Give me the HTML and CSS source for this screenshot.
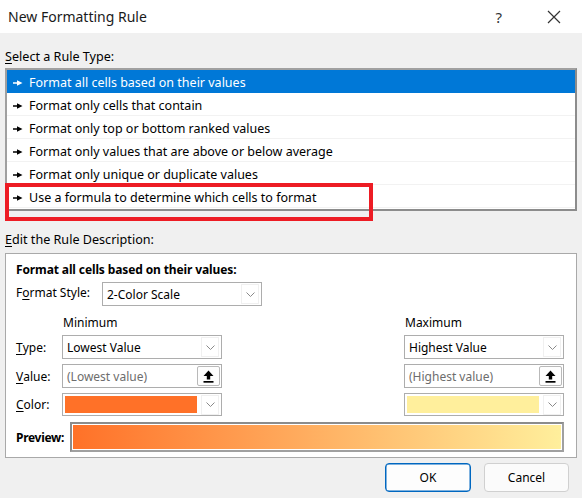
FILE: index.html
```html
<!DOCTYPE html>
<html>
<head>
<meta charset="utf-8">
<link rel="stylesheet" href="styles.css">
</head>
<body>
<div class="dialog">
  <div class="titlebar">
    <div class="title">New Formatting Rule</div>
    <div class="help">?</div>
    <svg class="close" width="14" height="14" viewBox="0 0 14 14"><path d="M1 1L13 13M13 1L1 13" stroke="#333" stroke-width="1.2" fill="none"/></svg>
  </div>
  <div class="content">
    <div class="group-label"><u>S</u>elect a Rule Type:</div>
    <div class="listbox">
      <div class="row selected"><svg class="arrow" width="10" height="6" viewBox="0 0 10 6"><path d="M0 2.3H4V0.3L9.5 3L4 5.7V3.7H0Z" fill="#fff"/></svg>Format all cells based on their values</div>
      <div class="row"><svg class="arrow" width="10" height="6" viewBox="0 0 10 6"><path d="M0 2.3H4V0.3L9.5 3L4 5.7V3.7H0Z" fill="#000"/></svg>Format only cells that contain</div>
      <div class="row"><svg class="arrow" width="10" height="6" viewBox="0 0 10 6"><path d="M0 2.3H4V0.3L9.5 3L4 5.7V3.7H0Z" fill="#000"/></svg>Format only top or bottom ranked values</div>
      <div class="row"><svg class="arrow" width="10" height="6" viewBox="0 0 10 6"><path d="M0 2.3H4V0.3L9.5 3L4 5.7V3.7H0Z" fill="#000"/></svg>Format only values that are above or below average</div>
      <div class="row"><svg class="arrow" width="10" height="6" viewBox="0 0 10 6"><path d="M0 2.3H4V0.3L9.5 3L4 5.7V3.7H0Z" fill="#000"/></svg>Format only unique or duplicate values</div>
      <div class="row"><svg class="arrow" width="10" height="6" viewBox="0 0 10 6"><path d="M0 2.3H4V0.3L9.5 3L4 5.7V3.7H0Z" fill="#000"/></svg>Use a formula to determine which cells to format</div>
      <div class="highlight"></div>
    </div>
    <div class="group-label second"><u>E</u>dit the Rule Description:</div>
    <div class="desc">
      <div class="desc-title">Format all cells based on their values:</div>
      <div class="style-row">
        <div class="style-label">F<u>o</u>rmat Style:</div>
        <div class="select style-select"><span class="sel-text">2-Color Scale</span><span class="chev"><svg width="9" height="5" viewBox="0 0 9 5"><path d="M0.5 0.5L4.5 4.5L8.5 0.5" stroke="#8a8a8a" fill="none"/></svg></span></div>
      </div>
      <div class="scale-grid">
        <div class="cell-label"></div>
        <div class="col-head">Minimum</div>
        <div></div>
        <div class="col-head">Maximum</div>

        <div class="cell-label"><u>T</u>ype:</div>
        <div class="select"><span class="sel-text">Lowest Value</span><span class="chev"><svg width="9" height="5" viewBox="0 0 9 5"><path d="M0.5 0.5L4.5 4.5L8.5 0.5" stroke="#8a8a8a" fill="none"/></svg></span></div>
        <div></div>
        <div class="select"><span class="sel-text">Highest Value</span><span class="chev"><svg width="9" height="5" viewBox="0 0 9 5"><path d="M0.5 0.5L4.5 4.5L8.5 0.5" stroke="#8a8a8a" fill="none"/></svg></span></div>

        <div class="cell-label"><u>V</u>alue:</div>
        <div class="select input"><span class="sel-text placeholder">(Lowest value)</span><span class="upload"><svg width="11" height="13" viewBox="0 0 11 13"><path d="M5.5 0.5L10.5 6H7.2V9.6H3.8V6H0.5Z" fill="#000"/><rect x="0.5" y="11" width="10" height="1.7" fill="#000"/></svg></span></div>
        <div></div>
        <div class="select input"><span class="sel-text placeholder">(Highest value)</span><span class="upload"><svg width="11" height="13" viewBox="0 0 11 13"><path d="M5.5 0.5L10.5 6H7.2V9.6H3.8V6H0.5Z" fill="#000"/><rect x="0.5" y="11" width="10" height="1.7" fill="#000"/></svg></span></div>

        <div class="cell-label"><u>C</u>olor:</div>
        <div class="select color"><span class="swatch min"></span><span class="chev"><svg width="9" height="5" viewBox="0 0 9 5"><path d="M0.5 0.5L4.5 4.5L8.5 0.5" stroke="#8a8a8a" fill="none"/></svg></span></div>
        <div></div>
        <div class="select color"><span class="swatch max"></span><span class="chev"><svg width="9" height="5" viewBox="0 0 9 5"><path d="M0.5 0.5L4.5 4.5L8.5 0.5" stroke="#8a8a8a" fill="none"/></svg></span></div>
      </div>
      <div class="preview-row">
        <div class="preview-label">Preview:</div>
        <div class="preview-bar"><div class="preview-fill"></div></div>
      </div>
    </div>
    <div class="buttons">
      <div class="btn ok">OK</div>
      <div class="btn cancel">Cancel</div>
    </div>
  </div>
</div>
</body>
</html>
```
FILE: styles.css
```css
html, body {
  margin: 0;
  padding: 0;
}
body {
  width: 582px;
  height: 498px;
  overflow: hidden;
  background: #f0f0f0;
  font-family: "Noto Sans", "Open Sans", sans-serif;
  font-size: 12px;
  color: #000;
}
u {
  text-decoration: underline;
  text-underline-offset: 2px;
}
.titlebar {
  height: 33px;
  background: #fff;
  display: flex;
  align-items: center;
  padding-left: 8px;
}
.title {
  flex: 1;
  font-size: 14px;
  color: #1a1a1a;
  margin-top: -1px;
}
.help {
  font-size: 15px;
  color: #333;
  margin-right: 45px;
}
.close {
  margin-right: 21px;
}
.content {
  padding: 0 5px;
}
.group-label {
  margin-top: 16px;
  line-height: 16px;
  height: 16px;
  margin-bottom: 3px;
  font-size: 12.6px;
}
.group-label.second {
  margin-top: 21px;
  margin-bottom: 5px;
}
.listbox {
  position: relative;
  height: 143px;
  box-sizing: border-box;
  background: #fff;
  border: 2px solid #8c8c8c;
  border-top-color: #a0a0a0;
  border-left-color: #a0a0a0;
  font-size: 12.5px;
}
.row {
  height: 23px;
  box-sizing: border-box;
  line-height: 18px;
  padding-top: 3px;
  border-bottom: 1px solid #f2f2f2;
  padding-left: 6px;
  display: flex;
  align-items: center;
  white-space: nowrap;
}
.row.selected {
  background: #0078d7;
  color: #fff;
  border-bottom-color: #0078d7;
}
.arrow {
  margin-right: 6px;
  flex: none;
}
.highlight {
  position: absolute;
  left: -2px;
  top: 113px;
  width: 368px;
  height: 38px;
  box-sizing: border-box;
  border: 4px solid #ed1c24;
}
.desc {
  height: 205px;
  box-sizing: border-box;
  background: #fff;
  border: 1px solid #a9a9a9;
  padding: 8px 12px 0 10px;
}
.desc-title {
  font-weight: bold;
  line-height: 16px;
  height: 16px;
  letter-spacing: -0.12px;
}
.style-row {
  display: flex;
  align-items: center;
  margin-top: 4px;
}
.style-label {
  width: 86px;
  margin-top: -3px;
}
.select {
  display: flex;
  align-items: center;
  height: 24px;
  box-sizing: border-box;
  border: 1px solid #adadad;
  background: #fff;
}
.style-select {
  width: 160px;
}
.sel-text {
  flex: 1;
  padding-left: 4px;
  white-space: nowrap;
  overflow: hidden;
}
.placeholder {
  color: #6d6d6d;
}
.chev {
  width: 18px;
  height: 20px;
  box-sizing: border-box;
  margin-right: 2px;
  border: 1px solid #f0f0f0;
  display: flex;
  align-items: center;
  justify-content: center;
  flex: none;
}
.upload {
  width: 23px;
  height: 20px;
  box-sizing: border-box;
  margin-right: 1px;
  border: 1px solid #b9b9b9;
  border-radius: 2px;
  background: #fdfdfd;
  display: flex;
  align-items: center;
  justify-content: center;
  flex: none;
}
.scale-grid {
  display: grid;
  grid-template-columns: 46px 160px 1fr 160px;
  grid-template-rows: 17px 24px 24px 23px;
  row-gap: 5px;
  margin-top: 7px;
}
.col-head {
  line-height: 16px;
  padding-left: 1px;
  padding-top: 2px;
  align-self: start;
}
.cell-label {
  display: flex;
  align-items: center;
}
.select.color {
  height: 23px;
}
.swatch {
  flex: 1;
  align-self: stretch;
  margin: 2px 4px 2px 2px;
}
.swatch.min {
  background: #ff7128;
}
.swatch.max {
  background: #ffef9c;
}
.preview-row {
  display: flex;
  align-items: center;
  margin-top: 6px;
}
.preview-label {
  width: 54px;
  font-weight: bold;
  letter-spacing: -0.3px;
}
.preview-bar {
  flex: 1;
  height: 30px;
  box-sizing: border-box;
  border: 2px solid #8c8c8c;
  border-bottom-color: #a0a0a0;
  border-right-color: #a0a0a0;
  padding: 1px;
  background: #fff;
}
.preview-fill {
  height: 100%;
  background: linear-gradient(to right, #ff7128, #ffef9c);
}
.buttons {
  display: flex;
  justify-content: flex-end;
  gap: 13px;
  margin-top: 5px;
  margin-right: 8px;
}
.btn {
  height: 29px;
  box-sizing: border-box;
  border-radius: 4px;
  display: flex;
  align-items: center;
  justify-content: center;
  background: #fdfdfd;
}
.btn.ok {
  width: 86px;
  border: 1px solid #0067c0;
  box-shadow: inset 0 0 0 0.5px #0067c0;
}
.btn.cancel {
  width: 85px;
  border: 1px solid #d0d0d0;
  background: #fbfbfb;
}
```
